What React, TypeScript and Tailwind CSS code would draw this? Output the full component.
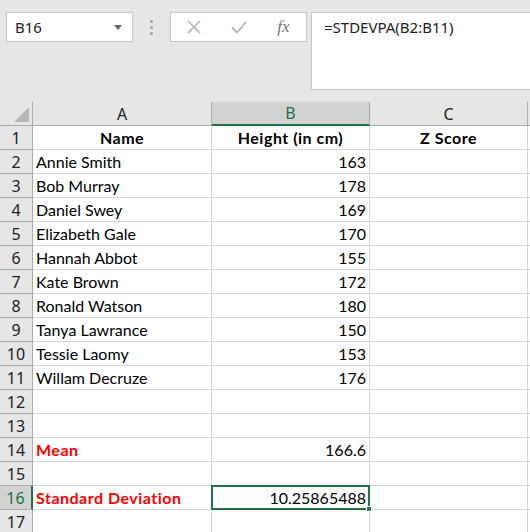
import React from "react";

const rows: { name: string; height: string; bold?: boolean; red?: boolean }[] = [
  { name: "Name", height: "Height (in cm)", bold: true },
  { name: "Annie Smith", height: "163" },
  { name: "Bob Murray", height: "178" },
  { name: "Daniel Swey", height: "169" },
  { name: "Elizabeth Gale", height: "170" },
  { name: "Hannah Abbot", height: "155" },
  { name: "Kate Brown", height: "172" },
  { name: "Ronald Watson", height: "180" },
  { name: "Tanya Lawrance", height: "150" },
  { name: "Tessie Laomy", height: "153" },
  { name: "Willam Decruze", height: "176" },
  { name: "", height: "" },
  { name: "", height: "" },
  { name: "Mean", height: "166.6", red: true },
  { name: "", height: "" },
  { name: "Standard Deviation", height: "10.25865488", red: true },
  { name: "", height: "" },
];

const cellFont = { fontFamily: "Lato, 'Noto Sans', sans-serif" };
const uiFont = { fontFamily: "'Noto Sans', 'Open Sans', sans-serif" };

export default function App() {
  return (
    <div className="w-[530px] h-[532px] overflow-hidden bg-[#e6e6e6] relative">
      {/* Formula bar area */}
      <div className="h-[102px] flex items-start pt-3 pl-1.5" style={uiFont}>
        <div className="w-[127px] h-[30px] bg-white border border-[#c6c6c6] flex items-center justify-between pl-2 pr-2.5">
          <span className="text-[15px] text-[#222]">B16</span>
          <svg width="8" height="5" viewBox="0 0 8 5">
            <path d="M0 0 L8 0 L4 5 Z" fill="#666" />
          </svg>
        </div>
        <div className="w-[37px] h-[30px] flex flex-col items-center justify-center gap-[3px]">
          <span className="w-[3px] h-[3px] rounded-full bg-[#a0a0a0]" />
          <span className="w-[3px] h-[3px] rounded-full bg-[#a0a0a0]" />
          <span className="w-[3px] h-[3px] rounded-full bg-[#a0a0a0]" />
        </div>
        <div className="w-[137px] h-[30px] bg-white border border-[#c6c6c6] flex items-center">
          <div className="w-[45px] flex justify-center">
            <svg width="16" height="16" viewBox="0 0 16 16">
              <path d="M2 2 L14 14 M14 2 L2 14" stroke="#b4b4b4" strokeWidth="1.6" />
            </svg>
          </div>
          <div className="w-[45px] flex justify-center">
            <svg width="18" height="16" viewBox="0 0 18 16">
              <path d="M2 8.5 L7 13.5 L16 3" stroke="#b4b4b4" strokeWidth="1.8" fill="none" />
            </svg>
          </div>
          <div className="w-[45px] flex justify-center">
            <span className="italic text-[17px] text-[#777]" style={{ fontFamily: "'Liberation Serif', serif" }}>
              fx
            </span>
          </div>
        </div>
        <div className="ml-1 flex-1 h-[78px] bg-white border border-[#c6c6c6] border-r-0 pl-[12px] pt-[2px]">
          <span className="text-[15px] text-[#222]">=STDEVPA(B2:B11)</span>
        </div>
      </div>

      {/* Grid */}
      <div
        className="grid grid-cols-[33px_179px_158px_158px_2px] grid-rows-[24px] auto-rows-[24px] bg-white"
        style={cellFont}
      >
        {/* header row */}
        <div className="bg-[#e6e6e6] border-r border-b border-[#ababab] relative">
          <svg className="absolute right-[3px] bottom-[3px]" width="15" height="15" viewBox="0 0 15 15">
            <path d="M15 0 L15 15 L0 15 Z" fill="#b7b7b7" />
          </svg>
        </div>
        <div className="bg-[#e6e6e6] border-r border-b border-[#ababab] flex items-center justify-center text-[16px] text-[#222]" style={uiFont}>
          A
        </div>
        <div className="bg-[#d2d2d2] border-r border-[#ababab] border-b-2 border-b-[#217346] flex items-center justify-center text-[16px] text-[#217346]" style={uiFont}>
          B
        </div>
        <div className="bg-[#e6e6e6] border-r border-b border-[#ababab] flex items-center justify-center text-[16px] text-[#222]" style={uiFont}>
          C
        </div>
        <div className="bg-[#e6e6e6] border-b border-[#ababab]" />

        {rows.map((r, i) => {
          const n = i + 1;
          const selected = n === 16;
          const textCls = `${r.bold || r.red ? "font-bold tracking-[0.5px]" : ""} ${r.red ? "text-[#ff0000]" : "text-black"}`;
          return (
            <React.Fragment key={n}>
              <div
                className={`flex items-center justify-center text-[16px] border-b ${
                  selected
                    ? "bg-[#d2d2d2] border-r-2 border-r-[#217346] border-b-[#ababab] text-[#217346]"
                    : "bg-[#e6e6e6] border-r border-[#ababab] text-[#222]"
                }`}
                style={uiFont}
              >
                {n}
              </div>
              <div
                className={`border-r border-b border-[#d4d4d4] flex items-center px-[3px] text-[16px] whitespace-nowrap ${
                  r.bold ? "justify-center" : ""
                } ${textCls}`}
              >
                {r.name}
              </div>
              <div
                className={`relative border-r border-b border-[#d4d4d4] flex items-center px-[3px] text-[16px] whitespace-nowrap ${
                  r.bold ? "justify-center font-bold tracking-[0.5px]" : "justify-end"
                } text-black`}
              >
                {r.height}
                {selected && (
                  <>
                    <div className="absolute -left-[1px] -top-[1px] -right-[1px] -bottom-[1px] border-2 border-[#217346]" />
                    <div className="absolute -right-[3px] -bottom-[3px] w-[6px] h-[6px] bg-[#217346] border border-white" />
                  </>
                )}
              </div>
              <div
                className={`border-r border-b border-[#d4d4d4] flex items-center justify-center text-[16px] ${
                  r.bold ? "font-bold tracking-[0.5px]" : ""
                } text-black`}
              >
                {r.bold ? "Z Score" : ""}
              </div>
              <div className="border-b border-[#d4d4d4]" />
            </React.Fragment>
          );
        })}
      </div>
    </div>
  );
}
